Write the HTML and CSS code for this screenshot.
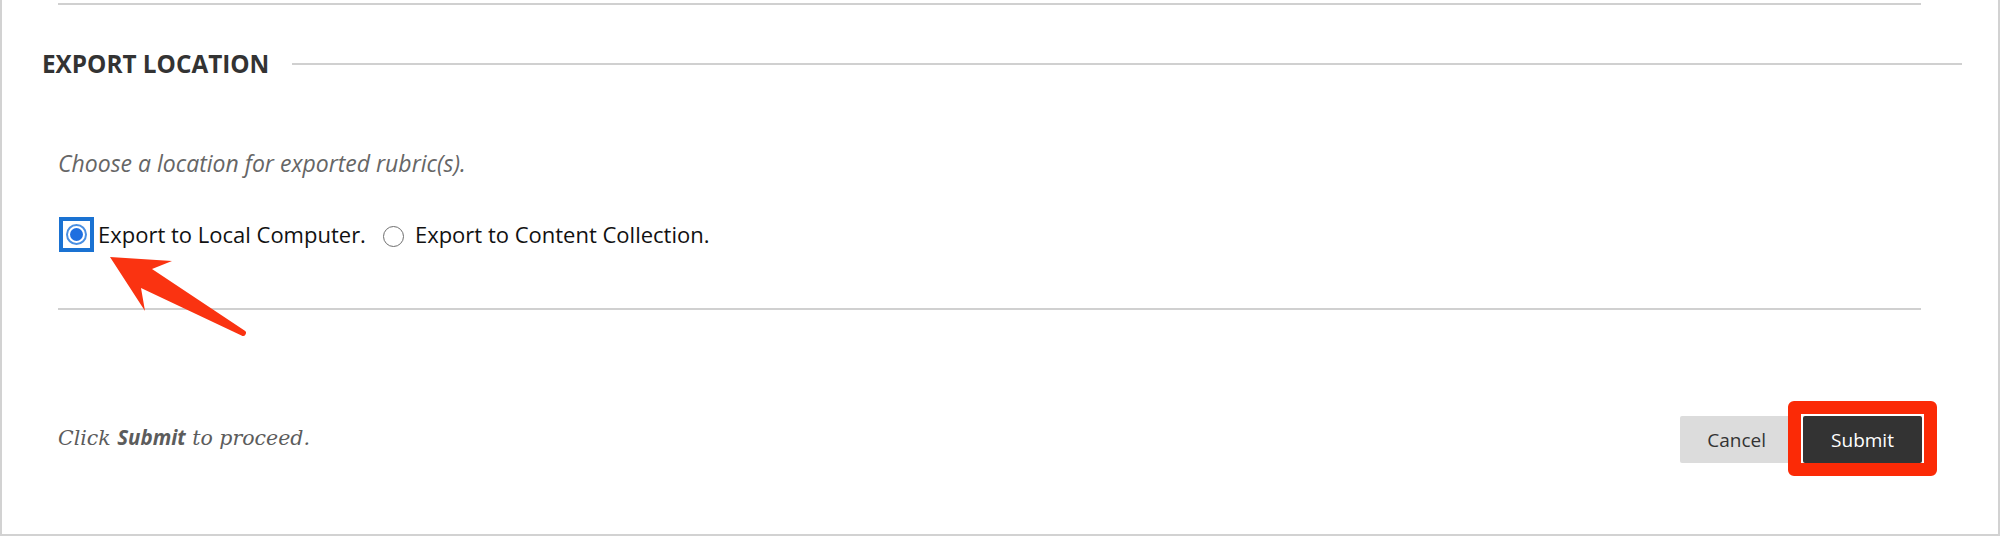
FILE: index.html
```html
<!DOCTYPE html>
<html lang="en">
<head>
<meta charset="utf-8">
<title>Export Location</title>
<link rel="stylesheet" href="styles.css">
</head>
<body>
<div class="panel">
  <div class="prev-step"></div>
  <div class="step">
    <h2 class="step-title"><span class="step-title-text">EXPORT LOCATION</span></h2>
    <div class="step-body">
      <p class="instructions">Choose a location for exported rubric(s).</p>
      <div class="radio-row">
        <label class="radio-option">
          <span class="focus-box"><span class="radio radio-checked"><span class="radio-dot"></span></span></span>
          <span class="radio-label">Export to Local Computer.</span>
        </label>
        <label class="radio-option second">
          <span class="radio"></span>
          <span class="radio-label">Export to Content Collection.</span>
        </label>
      </div>
    </div>
  </div>
  <div class="submit-row">
    <p class="submit-hint">Click <b>Submit</b> to proceed.</p>
    <div class="buttons">
      <button class="btn btn-cancel" type="button">Cancel</button>
      <span class="highlight"><button class="btn btn-submit" type="button">Submit</button></span>
    </div>
  </div>
  <svg class="arrow" width="260" height="350" viewBox="0 0 260 350" aria-hidden="true">
    <path d="M108,257 L170,261 L150,269 L242.5,330.5 A2.8,2.8 0 0 1 239.5,335.5 L139,288 L143,311 Z" fill="#fa3311"/>
  </svg>
</div>
</body>
</html>
```
FILE: styles.css
```css
html, body {
  margin: 0;
  padding: 0;
  background: #ffffff;
}

body {
  font-family: "Open Sans", "Liberation Sans", sans-serif;
  color: #111;
}

.panel {
  position: relative;
  height: 536px;
  box-sizing: border-box;
  border: 2px solid #d2d2d2;
  border-top: none;
}

.prev-step {
  margin: 0 77px 0 56px;
  height: 3px;
  border-bottom: 2px solid #d0d0d0;
}

.step-title {
  display: flex;
  align-items: center;
  gap: 23px;
  margin: 42px 36px 0 40px;
  height: 34px;
  font-size: 24.3px;
  font-weight: 700;
  color: #333;
  line-height: 34px;
}

.step-title::after {
  content: "";
  flex: 1;
  border-top: 2px solid #d0d0d0;
}

.step-body {
  margin: 0 77px 0 56px;
  padding-bottom: 56px;
  border-bottom: 2px solid #d0d0d0;
}

.instructions {
  margin: 67px 0 0;
  font-size: 23px;
  line-height: 30px;
  font-style: italic;
  color: #666;
}

.radio-row {
  display: flex;
  align-items: center;
  margin-top: 38px;
  height: 36px;
  font-size: 22px;
  color: #111;
}

.radio-option {
  display: flex;
  align-items: center;
}

.focus-box {
  display: flex;
  align-items: center;
  justify-content: center;
  width: 35px;
  height: 35px;
  box-sizing: border-box;
  border: 4px solid #1a72d2;
  margin: 0 4px 0 1px;
}

.radio {
  display: inline-block;
  box-sizing: border-box;
  width: 21px;
  height: 21px;
  border-radius: 50%;
  border: 1px solid #6e6e6e;
  background: #fff;
}

.radio-checked {
  display: flex;
  align-items: center;
  justify-content: center;
  border: 2px solid #4a8fe2;
}

.radio-dot {
  width: 13px;
  height: 13px;
  border-radius: 50%;
  background: #1f6fe0;
}

.second {
  margin-left: 17px;
}

.second .radio {
  margin: 4px 11px 0 0;
}

.submit-row {
  display: flex;
  align-items: center;
  justify-content: space-between;
  margin: 106px 76px 0 56px;
  height: 47px;
}

.submit-hint {
  margin: 0 0 5px;
  font-family: "DejaVu Serif", "Liberation Serif", serif;
  font-style: italic;
  font-size: 20.5px;
  color: #5c5c5c;
}

.submit-hint b {
  font-family: "Open Sans", "Liberation Sans", sans-serif;
  font-weight: 700;
  font-style: italic;
}

.buttons {
  display: flex;
  align-items: center;
  gap: 10px;
}

.btn {
  height: 47px;
  padding: 0 27px;
  border: none;
  border-radius: 2px;
  font-family: "Open Sans", "Liberation Sans", sans-serif;
  font-size: 19px;
  cursor: pointer;
}

.btn-cancel {
  background: #dcdcdc;
  color: #333;
}

.btn-submit {
  background: #333333;
  color: #ffffff;
  width: 119px;
  padding: 0;
}

.highlight {
  position: relative;
  display: inline-flex;
}

.highlight::after {
  content: "";
  position: absolute;
  top: -15px;
  left: -15px;
  right: -15px;
  bottom: -13px;
  border: 13px solid #fb2a06;
  border-radius: 6px;
  pointer-events: none;
}

.arrow {
  position: absolute;
  left: 0;
  top: 0;
  pointer-events: none;
}
```
